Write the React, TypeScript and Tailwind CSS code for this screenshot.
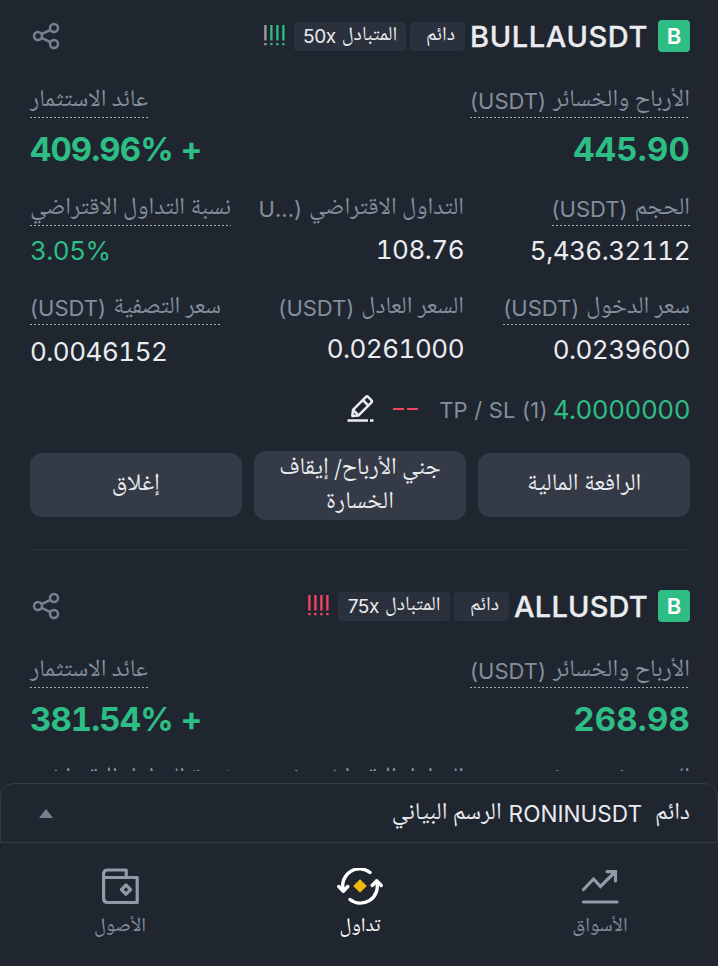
import type { ReactNode } from "react";

const arabic = "font-['Noto_Naskh_Arabic_UI','Noto_Naskh_Arabic','Noto_Sans_Arabic','DejaVu_Sans',sans-serif]";

interface LabelProps {
  text: string;
  unit?: string;
  underline?: boolean;
}

function Label({ text, unit, underline = true }: LabelProps) {
  return (
    <div className="flex h-[34px] w-fit flex-col whitespace-nowrap text-[#848e9c]">
      <div className="flex h-[33px] items-center gap-[7px]">
        <span className={`${arabic} pb-[2px] text-[24px] leading-[31px]`}>{text}</span>
        {unit && <span className="pt-px text-[22px] leading-[30px]">{unit}</span>}
      </div>
      {underline && (
        <div className="h-px bg-[repeating-linear-gradient(90deg,#a3abb6_0_2px,transparent_2px_4px)]" />
      )}
    </div>
  );
}

function Cell({ end, children }: { end?: boolean; children: ReactNode }) {
  return <div className={`flex flex-col ${end ? "items-end" : "items-start"}`}>{children}</div>;
}

function Value({ children, className = "leading-[50px] text-[#eaecef]" }: { children: ReactNode; className?: string }) {
  return (
    <div dir="ltr" className={`h-[50px] text-[26px] tracking-[-0.5px] tabular-nums ${className}`}>
      {children}
    </div>
  );
}

function ShareIcon() {
  return (
    <svg width="28" height="28" viewBox="0 0 28 28" fill="none" stroke="#76808f" strokeWidth="2.5">
      <circle cx="6" cy="14" r="4" />
      <circle cx="22" cy="6" r="4" />
      <circle cx="22" cy="22" r="4" />
      <path d="M9.6 12.2 18.4 7.8M9.6 15.8l8.8 4.4" />
    </svg>
  );
}

function EditIcon() {
  return (
    <svg width="28" height="30" viewBox="0 0 28 30" fill="none" stroke="#eaecef" strokeWidth="2.5" strokeLinejoin="round">
      <path d="M5.3 22 6 15.8 18.7 3.1q1.3-1.3 2.6 0l3 3q1.3 1.3 0 2.6L11.6 21.4z" />
      <path d="M15.8 6l5.6 5.6M6 15.8l5.6 5.6" />
      <path d="M.5 26.5H21M23 26.5h3.5" />
    </svg>
  );
}

interface PositionProps {
  symbol: string;
  symbolClass: string;
  leverage: string;
  pnl: string;
  roi: string;
  marks: string[];
  children?: ReactNode;
}

function Position({ symbol, symbolClass, leverage, pnl, roi, marks, children }: PositionProps) {
  return (
    <section className="h-[570px] shrink-0 pt-5 pr-7 pl-[30px]">
      <div className="flex h-8 items-center">
        <span className="flex size-8 items-center justify-center rounded-[4px] bg-[#2ebd85] text-[22px] font-semibold text-white">
          B
        </span>
        <span
          className={`mr-[10px] pt-[2px] text-[29px] font-medium text-[#eaecef] [-webkit-text-stroke:0.3px_#eaecef] ${symbolClass}`}
        >
          {symbol}
        </span>
        <span className={`${arabic} mr-[5px] flex h-[29px] w-[55px] items-center rounded-[4px] bg-[#2b313c] pr-[10px] text-[20px] leading-[26px] text-[#eaecef]`}>
          دائم
        </span>
        <span className="mr-1 flex h-[29px] w-[112px] items-center justify-center gap-[6px] rounded-[4px] bg-[#2b313c] text-[#eaecef]">
          <span className={`${arabic} text-[20px] leading-[26px]`}>المتبادل</span>
          <span dir="ltr" className="pt-[2px] text-[19px] tracking-[-0.4px]">{leverage}</span>
        </span>
        <svg width="24" height="22" viewBox="0 0 24 22" className="mr-[7px] mb-[2px]">
          {marks.map((color, i) => (
            <path key={i} d={`M${2.4 + i * 6} 1v15.5M${2.4 + i * 6} 19v2.2`} stroke={color} strokeWidth="2.3" />
          ))}
        </svg>
        <span className="mr-auto ml-[2px]">
          <ShareIcon />
        </span>
      </div>

      <div className="mt-8 flex justify-between">
        <Cell>
          <Label text="الأرباح والخسائر" unit="(USDT)" />
          <div dir="ltr" className="h-[62px] text-[33px] leading-[63px] font-bold tracking-[0.2px] tabular-nums text-[#2ebd85]">
            {pnl}
          </div>
        </Cell>
        <Cell end>
          <Label text="عائد الاستثمار" />
          <div dir="ltr" className="h-[62px] text-[33px] leading-[63px] font-bold tracking-[-0.9px] tabular-nums text-[#2ebd85]">
            {roi}
          </div>
        </Cell>
      </div>

      <div className="mt-3 grid grid-cols-[226px_204px_1fr]">
        <Cell>
          <Label text="الحجم" unit="(USDT)" />
          <Value>5,436.32112</Value>
        </Cell>
        <Cell>
          <Label text="التداول الاقتراضي" unit="(...U" underline={false} />
          <Value className="leading-[48px] text-[#eaecef]">108.76</Value>
        </Cell>
        <Cell end>
          <Label text="نسبة التداول الاقتراضي" />
          <Value className="leading-[50px] text-[#2ebd85]">3.05%</Value>
        </Cell>
      </div>
      {children}
    </section>
  );
}

function ActionButton({ children, className = "mb-[2px] h-16 pb-[2px]" }: { children: ReactNode; className?: string }) {
  return (
    <button
      className={`${arabic} flex w-[212px] items-center justify-center rounded-[12px] bg-[#343a46] text-center text-[24px] leading-[34px] text-[#eaecef] ${className}`}
    >
      {children}
    </button>
  );
}

function NavItem({ label, active, children }: { label: string; active?: boolean; children: ReactNode }) {
  return (
    <div className="flex w-[240px] shrink-0 flex-col items-center">
      <div className="flex h-10 items-center">{children}</div>
      <span className={`${arabic} mt-[5px] text-[20px] leading-[30px] ${active ? "text-white" : "text-[#848e9c]"}`}>
        {label}
      </span>
    </div>
  );
}

export default function App() {
  return (
    <div dir="rtl" className="flex h-[966px] w-[718px] flex-col overflow-hidden bg-[#1f2630] font-['Inter','Liberation_Sans',sans-serif]">
      <main className="flex h-[771px] shrink-0 flex-col overflow-hidden">
        <Position
          symbol="BULLAUSDT"
          symbolClass="tracking-[0.6px]"
          leverage="50x"
          pnl="445.90"
          roi="409.96% +"
          marks={["#a0a0a0", "#2ebd85", "#2ebd85", "#2ebd85"]}
        >
          <div className="mt-[15px] grid grid-cols-[226px_204px_1fr]">
            <Cell>
              <Label text="سعر الدخول" unit="(USDT)" />
              <Value>0.0239600</Value>
            </Cell>
            <Cell>
              <Label text="السعر العادل" unit="(USDT)" underline={false} />
              <Value className="leading-[48px] text-[#eaecef]">0.0261000</Value>
            </Cell>
            <Cell end>
              <Label text="سعر التصفية" unit="(USDT)" />
              <Value className="leading-[54px] text-[#eaecef]">0.0046152</Value>
            </Cell>
          </div>
          <div className="mt-[18px] flex h-8 items-center">
            <span className="text-[26px] tracking-[-0.5px] tabular-nums text-[#2ebd85]">4.0000000</span>
            <span dir="ltr" className="mr-[5px] pt-[3px] text-[22px] tracking-[0.2px] text-[#848e9c]">TP / SL (1)</span>
            <span className="mr-[21px] flex gap-[3px]">
              <i className="h-[2px] w-[11px] bg-[#f6465d]" />
              <i className="h-[2px] w-[11px] bg-[#f6465d]" />
            </span>
            <span className="mr-[18px]">
              <EditIcon />
            </span>
          </div>
          <div className="mt-[26px] flex items-center gap-3">
            <ActionButton>الرافعة المالية</ActionButton>
            <ActionButton className="h-[69px] pb-[2px]">
              جني الأرباح/ إيقاف
              <br />
              الخسارة
            </ActionButton>
            <ActionButton>إغلاق</ActionButton>
          </div>
          <div className="mx-[2px] mt-[29px] h-px bg-[#2b313c]" />
        </Position>

        <Position
          symbol="ALLUSDT"
          symbolClass="tracking-[0.2px]"
          leverage="75x"
          pnl="268.98"
          roi="381.54% +"
          marks={["#f6465d", "#f6465d", "#f6465d", "#f6465d"]}
        />
      </main>

      {/* Collapsed chart panel */}
      <div className="mt-3 flex h-[60px] shrink-0 items-center rounded-t-[14px] border border-[#343a46] pr-[27px] pl-[38px] text-[#eaecef]">
        <span className={`${arabic} text-[24px] leading-[32px]`}>دائم</span>
        <span className="mr-[13px] pt-[2px] text-[22.6px]">RONINUSDT</span>
        <span className={`${arabic} mr-[7px] text-[24px] leading-[32px]`}>الرسم البياني</span>
        <svg width="14" height="9" viewBox="0 0 14 9" className="mr-auto">
          <path d="M7 0l7 9H0z" fill="#76808f" />
        </svg>
      </div>

      <nav className="flex w-[720px] self-end pt-6">
        <NavItem label="الأسواق">
          <svg width="38" height="38" viewBox="0 0 38 38" fill="none" stroke="#929aa5" strokeWidth="3.2" strokeLinecap="round">
            <path d="M2.5 21.5 12.5 11l7 7.5L34 4M26 3.6h8.5V13M2.5 34H36" />
          </svg>
        </NavItem>
        <NavItem label="تداول" active>
          <svg width="46" height="38" viewBox="0 0 46 38" fill="none" stroke="#fff" strokeWidth="3.4" strokeLinecap="round" strokeLinejoin="round">
            <path d="M33 4.5A16.8 16.8 0 0 0 6.3 22M1.8 18.5l4.5 4.8 4.5-4.8" />
            <path d="M13 31.5A16.8 16.8 0 0 0 39.7 14M35.2 17.5l4.5-4.8 4.5 4.8" />
            <path d="M23 11.2l6.8 6.8-6.8 6.8-6.8-6.8z" fill="#f0b90b" stroke="none" />
          </svg>
        </NavItem>
        <NavItem label="الأصول">
          <svg width="38" height="38" viewBox="0 0 38 38" fill="none" stroke="#929aa5" strokeWidth="3.2" strokeLinejoin="round">
            <path d="M2.6 9.5V6q0-4 4-4h18.6v7.5M2.6 9.5h33.6v25H6.6q-4 0-4-4z" />
            <path d="M25 17l4.6 4.6-4.6 4.6-4.6-4.6z" />
          </svg>
        </NavItem>
      </nav>
    </div>
  );
}
